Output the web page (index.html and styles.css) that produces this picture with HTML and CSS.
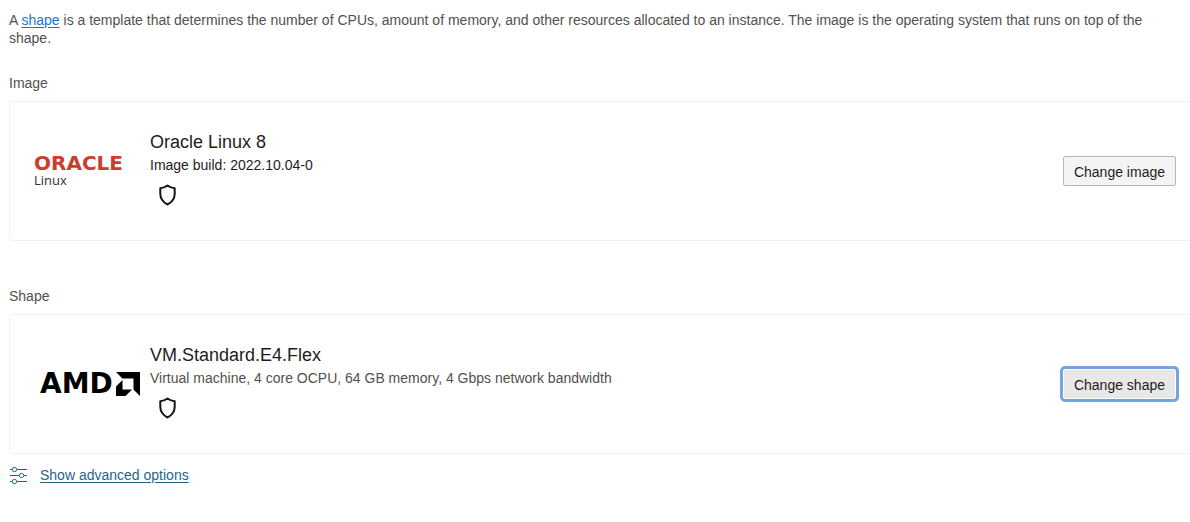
FILE: index.html
```html
<!DOCTYPE html>
<html lang="en">
<head>
    <meta charset="UTF-8">
    <meta name="viewport" content="width=device-width, initial-scale=1.0">
    <title>Image and shape</title>
    <link rel="stylesheet" href="styles.css">
</head>
<body>

<main class="page">
    <p class="intro">A <a class="shape-link" href="#shape">shape</a> is a template that determines the number of CPUs, amount of memory, and other resources allocated to an instance. The image is the operating system that runs on top of the shape.</p>

    <section class="section">
        <h2 class="section-label">Image</h2>
        <div class="card">
            <div class="logo oracle-logo">
                <span class="oracle-name">ORACLE</span>
                <span class="oracle-product">Linux</span>
            </div>
            <div class="details">
                <h3 class="title">Oracle Linux 8</h3>
                <p class="description dark">Image build: 2022.10.04-0</p>
                <svg class="shield" viewBox="0 0 18 22" aria-hidden="true">
                    <path d="M9.500 1.500C11.500 3 14 4 16.700 4.200V10C16.700 14.500 13.500 18.800 9.500 20.500C5.500 18.800 2.300 14.500 2.300 10V4.200C5 4 7.500 3 9.500 1.500Z"/>
                </svg>
            </div>
            <button class="button" type="button">Change image</button>
        </div>
    </section>

    <section class="section" id="shape">
        <h2 class="section-label">Shape</h2>
        <div class="card">
            <div class="logo amd-logo">
                <span class="amd-name">AMD</span>
                <svg class="amd-arrow" viewBox="0 0 24 24" aria-hidden="true">
                    <path d="M0 0H24V24L17.500 17.500V6.500H6.500Z"/>
                    <path d="M6.500 8V17.500H16L9.500 24H0V14.500Z"/>
                </svg>
            </div>
            <div class="details">
                <h3 class="title">VM.Standard.E4.Flex</h3>
                <p class="description">Virtual machine, 4 core OCPU, 64 GB memory, 4 Gbps network bandwidth</p>
                <svg class="shield" viewBox="0 0 18 22" aria-hidden="true">
                    <path d="M9.500 1.500C11.500 3 14 4 16.700 4.200V10C16.700 14.500 13.500 18.800 9.500 20.500C5.500 18.800 2.300 14.500 2.300 10V4.200C5 4 7.500 3 9.500 1.500Z"/>
                </svg>
            </div>
            <button class="button focused" type="button">Change shape</button>
        </div>
    </section>

    <div class="advanced">
        <svg class="sliders" viewBox="0 0 18 20" aria-hidden="true">
            <path d="M1 4.500H3M8 4.500H18M1 10.500H10M15 10.500H18M1 16.500H3M8 16.500H18"/>
            <circle cx="5.500" cy="4.500" r="2.200"/>
            <circle cx="12.500" cy="10.500" r="2.200"/>
            <circle cx="5.500" cy="16.500" r="2.200"/>
        </svg>
        <a class="advanced-link" href="#advanced">Show advanced options</a>
    </div>
</main>

</body>
</html>
```

FILE: styles.css
```css
* {
    box-sizing: border-box;
}
body {
    margin: 0;
    background-color: #fff;
    color: #54504c;
    font-family: "Liberation Sans", Arial, sans-serif;
    font-size: 14px;
    line-height: 18px;
}
.page {
    padding: 11px 0 11px 9px;
}
.intro {
    margin: 0 24px 0 0;
}
.shape-link {
    color: #1f74cf;
    text-underline-offset: 2px;
}
.section {
    padding-top: 27px;
}
.section + .section {
    padding-top: 46px;
}
.section-label {
    margin: 0 0 9px;
    font-size: 14px;
    font-weight: normal;
}
/* cards run on to the right edge of the panel */
.card {
    display: flex;
    align-items: center;
    min-height: 140px;
    padding: 0 14px 0 24px;
    border: 1px solid #f3f2f1;
    border-right: 0;
    border-radius: 4px 0 0 4px;
}
.logo {
    display: flex;
    flex-shrink: 0;
    width: 116px;
}
.oracle-logo {
    flex-direction: column;
}
.oracle-name {
    color: #c8402d;
    font-family: "DejaVu Sans", sans-serif;
    font-size: 20px;
    font-weight: bold;
    line-height: 18px;
}
.oracle-product {
    color: #35312e;
    font-family: "Open Sans", sans-serif;
    font-size: 13px;
    line-height: 16px;
}
.amd-logo {
    align-items: center;
    padding-left: 6px;
    color: #000;
}
.amd-name {
    font-family: "DejaVu Sans", sans-serif;
    font-size: 28px;
    font-weight: bold;
    line-height: 28px;
}
.amd-arrow {
    flex-shrink: 0;
    width: 24px;
    height: 24px;
    margin-left: 3px;
}
.details {
    flex-grow: 1;
    padding-bottom: 5px;
}
.title {
    margin: 0 0 4px;
    color: #1f1c1a;
    font-size: 18px;
    font-weight: normal;
    line-height: 20px;
}
.description {
    margin: 0 0 10px;
}
.dark {
    color: #1f1c1a;
}
.shield {
    display: block;
    width: 18px;
    height: 22px;
    margin-left: 8px;
    fill: none;
    stroke: #161513;
    stroke-width: 2;
    stroke-linejoin: round;
}
.button {
    flex-shrink: 0;
    height: 30px;
    padding: 1px 10px 0;
    border: 1px solid #b3b7bf;
    border-radius: 2px;
    background-color: #f5f4f5;
    color: #1f1c1a;
    font: inherit;
    cursor: pointer;
}
.focused {
    border-color: #fff;
    background-color: #e8e8e8;
    box-shadow: 0 0 0 3px #75a5e0;
}
.advanced {
    display: flex;
    align-items: center;
    gap: 13px;
    padding-top: 11px;
}
.sliders {
    width: 18px;
    height: 20px;
    fill: none;
    stroke: #1f6685;
}
.advanced-link {
    color: #1f6685;
    text-underline-offset: 2px;
}
```
